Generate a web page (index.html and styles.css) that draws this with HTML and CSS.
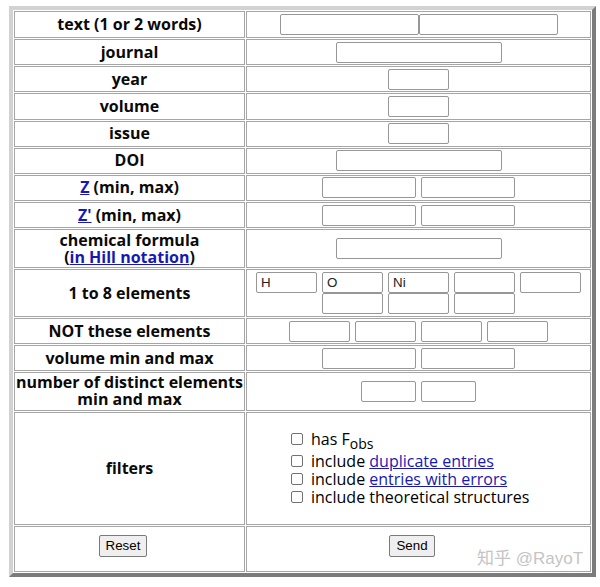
FILE: index.html
```html
<!DOCTYPE html>
<html lang="en">
<head>
<meta charset="utf-8">
<title>Search</title>
<link rel="stylesheet" href="styles.css">
</head>
<body>
<form class="search">
  <div class="cell label">text (1 or 2 words)</div>
  <div class="cell field joined"><input class="in w139" type="text"><input class="in w139" type="text"></div>

  <div class="cell label">journal</div>
  <div class="cell field"><input class="in w166" type="text"></div>

  <div class="cell label">year</div>
  <div class="cell field"><input class="in w61" type="text"></div>

  <div class="cell label">volume</div>
  <div class="cell field"><input class="in w61" type="text"></div>

  <div class="cell label">issue</div>
  <div class="cell field"><input class="in w61" type="text"></div>

  <div class="cell label">DOI</div>
  <div class="cell field"><input class="in w166" type="text"></div>

  <div class="cell label"><span><a href="#">Z</a> (min, max)</span></div>
  <div class="cell field"><input class="in w94" type="text"><input class="in w94" type="text"></div>

  <div class="cell label"><span><a href="#">Z'</a> (min, max)</span></div>
  <div class="cell field"><input class="in w94" type="text"><input class="in w94" type="text"></div>

  <div class="cell label"><span>chemical formula<br>(<a href="#">in Hill notation</a>)</span></div>
  <div class="cell field"><input class="in w166" type="text"></div>

  <div class="cell label">1 to 8 elements</div>
  <div class="cell field wrap">
    <input class="in w61" type="text" value="H"><input class="in w61" type="text" value="O"><input class="in w61" type="text" value="Ni"><input class="in w61" type="text"><input class="in w61" type="text"><input class="in w61" type="text"><input class="in w61" type="text"><input class="in w61" type="text">
  </div>

  <div class="cell label">NOT these elements</div>
  <div class="cell field"><input class="in w61" type="text"><input class="in w61" type="text"><input class="in w61" type="text"><input class="in w61" type="text"></div>

  <div class="cell label">volume min and max</div>
  <div class="cell field"><input class="in w94" type="text"><input class="in w94" type="text"></div>

  <div class="cell label"><span>number of distinct elements<br>min and max</span></div>
  <div class="cell field"><input class="in w55" type="text"><input class="in w55" type="text"></div>

  <div class="cell label">filters</div>
  <div class="cell filters">
    <label class="opt first"><input class="chk" type="checkbox"><span>has F<sub class="sub">obs</sub></span></label>
    <label class="opt"><input class="chk" type="checkbox"><span>include <a href="#">duplicate entries</a></span></label>
    <label class="opt"><input class="chk" type="checkbox"><span>include <a href="#">entries with errors</a></span></label>
    <label class="opt"><input class="chk" type="checkbox"><span>include theoretical structures</span></label>
  </div>

  <div class="cell action"><button class="btn" type="reset">Reset</button></div>
  <div class="cell action"><button class="btn" type="submit">Send</button></div>
</form>
<div class="watermark">知乎 @RayoT</div>
</body>
</html>
```
FILE: styles.css
```css
html, body {
  margin: 0;
  padding: 0;
  background: #ffffff;
}

body {
  font-family: "Open Sans", "Noto Sans", sans-serif;
  color: #000;
  position: relative;
  width: 600px;
  height: 587px;
  overflow: hidden;
}

.search {
  box-sizing: border-box;
  margin: 6px 0 0 9px;
  width: 587px;
  display: grid;
  grid-template-columns: 231px 345px;
  grid-template-rows: 27px 26px 26.3px 26.4px 26.3px 25.7px 26.3px 26.3px 38.7px 48.3px 26px 25.7px 39px 112.7px 46.3px;
  gap: 1px;
  padding: 1px;
  border: 4px solid;
  border-color: #d2d2d2 #7c7c7c #7c7c7c #d2d2d2;
  background: #fff;
}

.cell {
  box-sizing: border-box;
  border: 1px solid #a6a6a6;
  display: flex;
  align-items: center;
  justify-content: center;
}

.label {
  font-weight: 700;
  font-size: 16px;
  line-height: 17px;
  text-align: center;
  color: #0a0a0a;
}

.label a,
.filters a {
  color: #1818b4;
  text-decoration: underline;
}

.field {
  gap: 5px;
}

.field.joined {
  gap: 0;
}

.field.wrap {
  flex-wrap: wrap;
  align-content: center;
  row-gap: 0;
  padding: 0 9px;
}

.in {
  box-sizing: border-box;
  height: 21px;
  margin: 0;
  padding: 0 4px;
  border: 1px solid #979797;
  border-radius: 2px;
  background: #fff;
  font-family: "Liberation Sans", Arial, sans-serif;
  font-size: 13.33px;
  color: #222;
}

.w139 { width: 139px; }
.w166 { width: 166px; }
.w94 { width: 94px; }
.w61 { width: 61px; }
.w55 { width: 55px; }

.filters {
  flex-direction: column;
  align-items: flex-start;
  justify-content: center;
  padding-left: 44px;
  font-size: 16px;
  line-height: 18px;
}

.opt {
  display: flex;
  align-items: center;
  gap: 8px;
  height: 18px;
}

.opt.first {
  margin-bottom: 4px;
}

.chk {
  appearance: none;
  -webkit-appearance: none;
  box-sizing: border-box;
  width: 12px;
  height: 12px;
  margin: 0;
  border: 1px solid #727272;
  border-radius: 2px;
  background: #fff;
}

.sub {
  font-size: 14px;
  line-height: 0;
  vertical-align: -4px;
}

.action {
  align-items: center;
}

.btn {
  box-sizing: border-box;
  height: 22px;
  margin: 0 13px 6px 0;
  padding: 0 6px;
  border: 1px solid #7a7a7a;
  border-radius: 2px;
  background: #efefef;
  font-family: "Liberation Sans", Arial, sans-serif;
  font-size: 13.33px;
  color: #000;
}

.watermark {
  position: absolute;
  left: 477px;
  top: 549px;
  font-family: "Liberation Sans", "Noto Sans CJK SC", sans-serif;
  font-size: 17px;
  line-height: 20px;
  color: #c4c4c4;
  white-space: nowrap;
}
```
